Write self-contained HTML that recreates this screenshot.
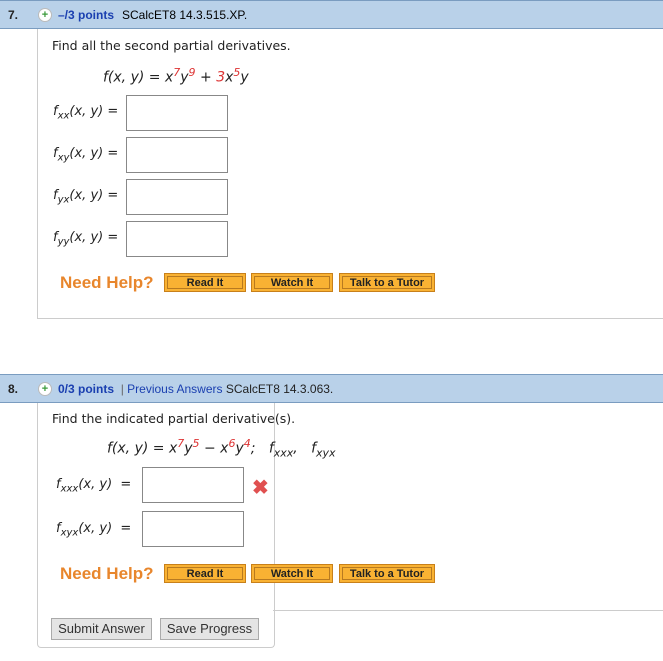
<html><head><style>
body{margin:0;width:663px;height:661px;background:#fff;font-family:"Liberation Sans",sans-serif;position:relative;overflow:hidden}
.a{position:absolute;white-space:nowrap}
.bar{position:absolute;left:0;width:663px;height:27px;background:#b9d1e9;border-top:1px solid #7a9cc0;border-bottom:1px solid #7a9cc0}
.num{font-weight:bold;font-size:12px;color:#222}
.plus{width:12px;height:12px;border-radius:50%;background:#fff;border:1px solid #bbb;color:#3a9a3a;font-size:11px;line-height:12px;text-align:center;font-weight:bold}
.blue{color:#1a3fb0;font-size:12px}
.txt{font-family:"DejaVu Sans",sans-serif;font-size:12.5px;color:#222}
.m{font-family:"DejaVu Sans",sans-serif;font-style:oblique;font-size:14px;color:#222}
.l{font-size:13px}
.r{color:#d33}
.box{position:absolute;width:100px;height:34px;border:1px solid #888;background:#fff}
.need{font-weight:bold;font-size:17px;color:#e8862c}
.btn{position:absolute;height:17px;background:#f9b233;border:1px solid #c8801a;box-shadow:inset 0 0 0 2px #f9b233,inset 0 0 0 3px #b87a20;font-weight:bold;font-size:11px;text-align:center;line-height:19px;color:#222}
.gb{position:absolute;height:20px;background:#e4e4e4;border:1px solid #aaa;font-size:13px;text-align:center;line-height:20px;color:#333}
sub,sup{font-size:11px}
.l sub{font-size:10px}
</style></head><body>
<div class="bar" style="top:0"></div>
<div class="a num" style="left:8px;top:8px">7.</div>
<div class="a plus" style="left:38px;top:8px">+</div>
<div class="a blue" style="left:58px;top:8px;font-weight:bold">–/3 points</div>
<div class="a" style="left:122px;top:8px;font-size:12px">SCalcET8 14.3.515.XP.</div>
<div class="a" style="left:37px;top:29px;width:626px;height:289px;border-left:1px solid #ccc;border-bottom:1px solid #ccc"></div>
<div class="a txt" style="left:52px;top:38px">Find all the second partial derivatives.</div>
<div class="a m" style="left:103px;top:66px">f(x, y) = x<sup class="r">7</sup>y<sup class="r">9</sup> + <span class="r">3</span>x<sup class="r">5</sup>y</div>
<div class="a m l" style="left:53px;top:104px">f<sub>xx</sub>(x, y) =</div><div class="box" style="left:126px;top:95px"></div>
<div class="a m l" style="left:53px;top:146px">f<sub>xy</sub>(x, y) =</div><div class="box" style="left:126px;top:137px"></div>
<div class="a m l" style="left:53px;top:188px">f<sub>yx</sub>(x, y) =</div><div class="box" style="left:126px;top:179px"></div>
<div class="a m l" style="left:53px;top:230px">f<sub>yy</sub>(x, y) =</div><div class="box" style="left:126px;top:221px"></div>
<div class="a need" style="left:60px;top:273px">Need Help?</div>
<div class="btn" style="left:164px;top:273px;width:80px">Read It</div>
<div class="btn" style="left:251px;top:273px;width:80px">Watch It</div>
<div class="btn" style="left:339px;top:273px;width:94px">Talk to a Tutor</div>

<div class="bar" style="top:374px"></div>
<div class="a num" style="left:8px;top:382px">8.</div>
<div class="a plus" style="left:38px;top:382px">+</div>
<div class="a blue" style="left:58px;top:382px"><b>0/3 points</b> <span style="color:#666">&nbsp;|</span> Previous Answers <span style="color:#222">SCalcET8 14.3.063.</span></div>
<div class="a" style="left:37px;top:403px;width:236px;height:244px;border-left:1px solid #ccc;border-right:1px solid #ccc;border-bottom:1px solid #ccc;border-radius:0 0 4px 4px"></div>
<div class="a" style="left:273px;top:610px;width:390px;border-top:1px solid #ccc"></div>
<div class="a txt" style="left:52px;top:411px">Find the indicated partial derivative(s).</div>
<div class="a m" style="left:107px;top:437px">f(x, y) = x<sup class="r">7</sup>y<sup class="r">5</sup> − x<sup class="r">6</sup>y<sup class="r">4</sup>; &nbsp; f<sub>xxx</sub>, &nbsp; f<sub>xyx</sub></div>
<div class="a m l" style="left:56px;top:477px">f<sub>xxx</sub>(x, y) &nbsp;=</div><div class="box" style="left:142px;top:467px"></div>
<div class="a" style="left:252px;top:475px;color:#e05050;font-size:20px;font-weight:bold">✖</div>
<div class="a m l" style="left:56px;top:521px">f<sub>xyx</sub>(x, y) &nbsp;=</div><div class="box" style="left:142px;top:511px"></div>
<div class="a need" style="left:60px;top:564px">Need Help?</div>
<div class="btn" style="left:164px;top:564px;width:80px">Read It</div>
<div class="btn" style="left:251px;top:564px;width:80px">Watch It</div>
<div class="btn" style="left:339px;top:564px;width:94px">Talk to a Tutor</div>
<div class="gb" style="left:51px;top:618px;width:99px">Submit Answer</div>
<div class="gb" style="left:160px;top:618px;width:97px">Save Progress</div>
</body></html>
